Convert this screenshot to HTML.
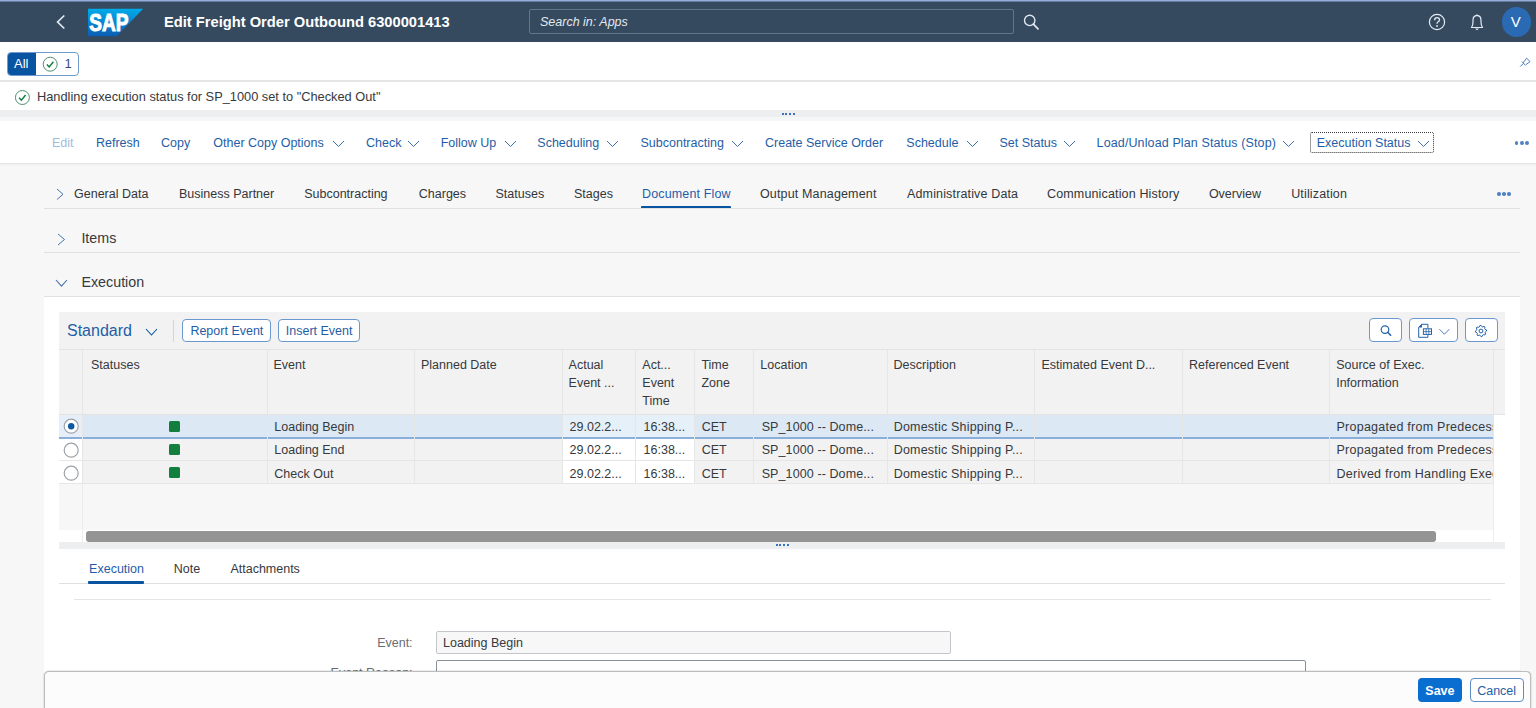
<!DOCTYPE html>
<html><head><meta charset="utf-8">
<style>
*{box-sizing:border-box}
html,body{margin:0;padding:0}
body{width:1536px;height:708px;overflow:hidden;position:relative;background:#f7f7f7;font-family:"Liberation Sans",sans-serif;color:#36393d}
.a{position:absolute}
.t{position:absolute;line-height:1;white-space:nowrap}
.lk{color:#0854a0}
.chev{position:absolute;width:12px;height:7px}
</style></head><body>

<!-- top line + shell -->
<div class="a" style="left:0;top:0;width:1536px;height:1px;background:#94acd7"></div><div class="a" style="left:0;top:1px;width:1536px;height:1px;background:#647b9d"></div>
<div class="a" style="left:0;top:2px;width:1536px;height:40px;background:#354a5f"></div>
<!-- back chevron -->
<svg class="a" style="left:54px;top:13px" width="14" height="18" viewBox="0 0 14 18"><path d="M10.3 2.5 L3.6 9 L10.3 15.5" fill="none" stroke="#e3ebf5" stroke-width="1.7"/></svg>
<!-- SAP logo -->
<svg class="a" style="left:88px;top:8px" width="56" height="29" viewBox="0 0 56 29">
<defs><linearGradient id="lg" x1="0" y1="0" x2="0" y2="1"><stop offset="0" stop-color="#00abeb"/><stop offset="0.45" stop-color="#0889d2"/><stop offset="1" stop-color="#0b5db3"/></linearGradient></defs>
<path d="M0 0.8 H55.2 L28.6 28.3 H0 Z" fill="url(#lg)"/>
<text x="1.2" y="23" font-family="Liberation Sans" font-weight="bold" font-size="23.5" fill="#fff" stroke="#fff" stroke-width="1" textLength="39.2" lengthAdjust="spacingAndGlyphs">SAP</text>
</svg>
<div class="t" style="left:164px;top:14.6px;font-size:14.7px;font-weight:bold;color:#fff">Edit Freight Order Outbound 6300001413</div>
<!-- search -->
<div class="a" style="left:529px;top:9px;width:485px;height:24.5px;border:1px solid #5f768f;border-radius:2px"></div>
<div class="t" style="left:540px;top:15.6px;font-size:12.5px;font-style:italic;color:#e3e9f0">Search in: Apps</div>
<svg class="a" style="left:1022px;top:13px" width="18" height="18" viewBox="0 0 18 18"><circle cx="7.7" cy="7.4" r="5.2" fill="none" stroke="#dfe7f0" stroke-width="1.4"/><path d="M11.4 11.2 L16 15.8" stroke="#dfe7f0" stroke-width="1.8" stroke-linecap="round"/></svg>
<!-- help -->
<svg class="a" style="left:1427px;top:12px" width="20" height="20" viewBox="0 0 20 20"><circle cx="10" cy="10" r="7.6" fill="none" stroke="#e5ebf2" stroke-width="1.2"/><path d="M7.6 8.2 Q7.6 5.6 10.1 5.6 Q12.5 5.6 12.5 7.9 Q12.5 9.3 10.9 10 Q10 10.5 10 11.8" fill="none" stroke="#e5ebf2" stroke-width="1.3"/><circle cx="10" cy="14" r="0.9" fill="#e5ebf2"/></svg>
<!-- bell -->
<svg class="a" style="left:1468px;top:12px" width="18" height="20" viewBox="0 0 18 20"><path d="M3.5 15.5 Q5 13.5 5 10 V8 Q5 3.8 9 3.4 Q13 3.8 13 8 V10 Q13 13.5 14.5 15.5 Z" fill="none" stroke="#e5ebf2" stroke-width="1.2" stroke-linejoin="round"/><path d="M7.6 16.8 Q9 18.4 10.4 16.8" fill="#e5ebf2" stroke="#e5ebf2" stroke-width="1"/><path d="M9 2.4 V3.4" stroke="#e5ebf2" stroke-width="1.2"/></svg>
<!-- avatar -->
<div class="a" style="left:1501.5px;top:7.2px;width:29.5px;height:29.5px;border-radius:50%;background:#2a6ab3"></div>
<div class="t" style="left:1510.8px;top:13.6px;font-size:15px;color:#fff">V</div>

<!-- row 2 -->
<div class="a" style="left:0;top:42px;width:1536px;height:38px;background:#fff"></div>
<div class="a" style="left:7px;top:52px;width:71.5px;height:24px;border:1px solid #6f9ccc;border-radius:4px;background:#fff;overflow:hidden"><div class="a" style="left:-1px;top:-1px;width:28.7px;height:24px;background:#0854a0"></div></div>
<div class="t" style="left:14px;top:57.2px;font-size:13px;color:#fff">All</div>
<svg class="a" style="left:42px;top:55.5px" width="17" height="17" viewBox="0 0 17 17"><circle cx="8.2" cy="8.2" r="7" fill="none" stroke="#4e9070" stroke-width="1"/><path d="M4.9 8.4 L7.2 10.9 L11.4 5.7" fill="none" stroke="#107e3e" stroke-width="1.5"/></svg>
<div class="t" style="left:64.5px;top:57.2px;font-size:13px;color:#34507a">1</div>
<svg class="a" style="left:1518px;top:56px" width="14" height="12" viewBox="0 0 14 12"><path d="M2.2 10.6 L5.4 7.4 M3.8 5.6 L7.6 9.4 M5.2 6.8 L8.6 2.2 L12.1 5.6 L7.9 8.6" fill="none" stroke="#4a7ac0" stroke-width="1" stroke-linejoin="round"/></svg>
<div class="a" style="left:0;top:80px;width:1536px;height:2px;background:#e5e5e5"></div>
<!-- message -->
<div class="a" style="left:0;top:82px;width:1536px;height:28px;background:#fff"></div>
<svg class="a" style="left:13.5px;top:89px" width="17" height="17" viewBox="0 0 17 17"><circle cx="8.4" cy="8.5" r="7" fill="none" stroke="#4e9070" stroke-width="1"/><path d="M5.1 8.7 L7.4 11.2 L11.6 6" fill="none" stroke="#107e3e" stroke-width="1.5"/></svg>
<div class="t" style="left:37px;top:91px;font-size:12.8px">Handling execution status for SP_1000 set to "Checked Out"</div>
<div class="a" style="left:0;top:110px;width:1536px;height:7px;background:#eceef0"></div>
<div class="a" style="left:0;top:117px;width:1536px;height:4px;background:#f5f6f7"></div>
<div class="a" style="left:781.5px;top:113px;width:2px;height:2px;background:#3a72bf"></div>
<div class="a" style="left:785.2px;top:113px;width:2px;height:2px;background:#3a72bf"></div>
<div class="a" style="left:788.9px;top:113px;width:2px;height:2px;background:#3a72bf"></div>
<div class="a" style="left:792.6px;top:113px;width:2px;height:2px;background:#3a72bf"></div>

<!-- toolbar -->
<div class="a" style="left:0;top:121px;width:1536px;height:42px;background:#fff"></div>
<div class="a" style="left:0;top:163px;width:1536px;height:1px;background:#e3e3e3"></div>
<div class="a" style="left:0;top:164px;width:1536px;height:2px;background:#f2f2f2"></div>
<div class="t" style="left:52px;top:136.62px;font-size:12.5px;color:#9fbcdc;">Edit</div>
<div class="t" style="left:96px;top:136.62px;font-size:12.5px;color:#1f5ea6;">Refresh</div>
<div class="t" style="left:161px;top:136.62px;font-size:12.5px;color:#1f5ea6;">Copy</div>
<div class="t" style="left:213.3px;top:136.62px;font-size:12.5px;color:#1f5ea6;">Other Copy Options</div>
<svg class="a" style="left:331.5px;top:139.9px" width="13" height="7.5" viewBox="0 0 13 7.5"><path d="M1 1 L6.5 6.5 L12 1" fill="none" stroke="#3d6fb0" stroke-width="1.0"/></svg>
<div class="t" style="left:366px;top:136.62px;font-size:12.5px;color:#1f5ea6;">Check</div>
<svg class="a" style="left:407px;top:139.9px" width="13" height="7.5" viewBox="0 0 13 7.5"><path d="M1 1 L6.5 6.5 L12 1" fill="none" stroke="#3d6fb0" stroke-width="1.0"/></svg>
<div class="t" style="left:440.7px;top:136.62px;font-size:12.5px;color:#1f5ea6;">Follow Up</div>
<svg class="a" style="left:503.5px;top:139.9px" width="13" height="7.5" viewBox="0 0 13 7.5"><path d="M1 1 L6.5 6.5 L12 1" fill="none" stroke="#3d6fb0" stroke-width="1.0"/></svg>
<div class="t" style="left:537.3px;top:136.62px;font-size:12.5px;color:#1f5ea6;">Scheduling</div>
<svg class="a" style="left:606px;top:139.9px" width="13" height="7.5" viewBox="0 0 13 7.5"><path d="M1 1 L6.5 6.5 L12 1" fill="none" stroke="#3d6fb0" stroke-width="1.0"/></svg>
<div class="t" style="left:640.5px;top:136.62px;font-size:12.5px;color:#1f5ea6;">Subcontracting</div>
<svg class="a" style="left:730.7px;top:139.9px" width="13" height="7.5" viewBox="0 0 13 7.5"><path d="M1 1 L6.5 6.5 L12 1" fill="none" stroke="#3d6fb0" stroke-width="1.0"/></svg>
<div class="t" style="left:765px;top:136.62px;font-size:12.5px;color:#1f5ea6;">Create Service Order</div>
<div class="t" style="left:906.3px;top:136.62px;font-size:12.5px;color:#1f5ea6;">Schedule</div>
<svg class="a" style="left:965.5px;top:139.9px" width="13" height="7.5" viewBox="0 0 13 7.5"><path d="M1 1 L6.5 6.5 L12 1" fill="none" stroke="#3d6fb0" stroke-width="1.0"/></svg>
<div class="t" style="left:999.4px;top:136.62px;font-size:12.5px;color:#1f5ea6;">Set Status</div>
<svg class="a" style="left:1062.5px;top:139.9px" width="13" height="7.5" viewBox="0 0 13 7.5"><path d="M1 1 L6.5 6.5 L12 1" fill="none" stroke="#3d6fb0" stroke-width="1.0"/></svg>
<div class="t" style="left:1096.6px;top:136.62px;font-size:12.5px;color:#1f5ea6;letter-spacing:0.12px;">Load/Unload Plan Status (Stop)</div>
<svg class="a" style="left:1282.2px;top:139.9px" width="13" height="7.5" viewBox="0 0 13 7.5"><path d="M1 1 L6.5 6.5 L12 1" fill="none" stroke="#3d6fb0" stroke-width="1.0"/></svg>
<div class="t" style="left:1316.7px;top:136.62px;font-size:12.5px;color:#1f5ea6;">Execution Status</div>
<svg class="a" style="left:1416.5px;top:139.9px" width="13" height="7.5" viewBox="0 0 13 7.5"><path d="M1 1 L6.5 6.5 L12 1" fill="none" stroke="#3d6fb0" stroke-width="1.0"/></svg>
<div class="a" style="left:1310px;top:132px;width:124px;height:21px;border:1px dotted #32363a;border-radius:2px"></div>
<div class="a" style="left:1514.6px;top:140.79999999999998px;width:3.8px;height:3.8px;border-radius:50%;background:#5282c2"></div>
<div class="a" style="left:1519.8999999999999px;top:140.79999999999998px;width:3.8px;height:3.8px;border-radius:50%;background:#5282c2"></div>
<div class="a" style="left:1525.3px;top:140.79999999999998px;width:3.8px;height:3.8px;border-radius:50%;background:#5282c2"></div>
<svg class="a" style="left:55.5px;top:187.5px" width="8" height="12.5" viewBox="0 0 8 12.5"><path d="M1 1 L7 6.25 L1 11.5" fill="none" stroke="#4672ad" stroke-width="1.0"/></svg>
<div class="t" style="left:74px;top:188.02px;font-size:12.5px;color:#32363a;">General Data</div>
<div class="t" style="left:179px;top:188.02px;font-size:12.5px;color:#32363a;">Business Partner</div>
<div class="t" style="left:304.2px;top:188.02px;font-size:12.5px;color:#32363a;">Subcontracting</div>
<div class="t" style="left:418.8px;top:188.02px;font-size:12.5px;color:#32363a;">Charges</div>
<div class="t" style="left:495.5px;top:188.02px;font-size:12.5px;color:#32363a;">Statuses</div>
<div class="t" style="left:574px;top:188.02px;font-size:12.5px;color:#32363a;">Stages</div>
<div class="t" style="left:642px;top:188.02px;font-size:12.5px;color:#1f5ea6;letter-spacing:0.15px;">Document Flow</div>
<div class="t" style="left:760px;top:188.02px;font-size:12.5px;color:#32363a;letter-spacing:0.15px;">Output Management</div>
<div class="t" style="left:907px;top:188.02px;font-size:12.5px;color:#32363a;letter-spacing:0.15px;">Administrative Data</div>
<div class="t" style="left:1047px;top:188.02px;font-size:12.5px;color:#32363a;letter-spacing:0.15px;">Communication History</div>
<div class="t" style="left:1208.9px;top:188.02px;font-size:12.5px;color:#32363a;">Overview</div>
<div class="t" style="left:1291.2px;top:188.02px;font-size:12.5px;color:#32363a;letter-spacing:0.15px;">Utilization</div>
<div class="a" style="left:641px;top:205.5px;width:90px;height:3px;background:#0854a0;border-radius:1px"></div>
<div class="a" style="left:1497.0px;top:192.39999999999998px;width:3.6px;height:3.6px;border-radius:50%;background:#5282c2"></div>
<div class="a" style="left:1502.1000000000001px;top:192.39999999999998px;width:3.6px;height:3.6px;border-radius:50%;background:#5282c2"></div>
<div class="a" style="left:1507.0px;top:192.39999999999998px;width:3.6px;height:3.6px;border-radius:50%;background:#5282c2"></div>
<div class="a" style="left:44px;top:207.5px;width:1476px;height:1px;background:#e1e1e1"></div>
<svg class="a" style="left:57px;top:232.8px" width="8.5" height="13" viewBox="0 0 8.5 13"><path d="M1 1 L7.5 6.5 L1 12" fill="none" stroke="#4672ad" stroke-width="1.0"/></svg>
<div class="t" style="left:81.4px;top:230.90px;font-size:14.3px;">Items</div>
<div class="a" style="left:44px;top:252px;width:1476px;height:1px;background:#e1e1e1"></div>
<svg class="a" style="left:54.5px;top:279.40000000000003px" width="13" height="8.2" viewBox="0 0 13 8.2"><path d="M1 1 L6.5 7.2 L12 1" fill="none" stroke="#4672ad" stroke-width="1.1"/></svg>
<div class="t" style="left:81.4px;top:275.30px;font-size:14.3px;">Execution</div>
<div class="a" style="left:44px;top:296px;width:1476px;height:1px;background:#e1e1e1"></div>
<div class="a" style="left:44px;top:297px;width:1476px;height:411px;background:#fff;"></div>
<div class="a" style="left:59px;top:312px;width:1446px;height:37px;background:#f2f2f2;"></div>
<div class="t" style="left:67px;top:322.76px;font-size:16px;color:#1f5ea6;">Standard</div>
<svg class="a" style="left:144.6px;top:327.6px" width="13" height="8" viewBox="0 0 13 8"><path d="M1 1 L6.5 7 L12 1" fill="none" stroke="#0854a0" stroke-width="1.1"/></svg>
<div class="a" style="left:173.3px;top:319.6px;width:1px;height:22px;background:#d5d5d5;"></div>
<div class="a" style="left:182px;top:318.5px;width:88.60000000000002px;height:23.5px;border:1px solid #6b98cf;border-radius:4px;background:#fff"></div>
<div class="t" style="left:190.4px;top:325.22px;font-size:12.5px;color:#1f5ea6;">Report Event</div>
<div class="a" style="left:278px;top:318.5px;width:81.80000000000001px;height:23.5px;border:1px solid #6b98cf;border-radius:4px;background:#fff"></div>
<div class="t" style="left:285.8px;top:325.22px;font-size:12.5px;color:#1f5ea6;">Insert Event</div>
<div class="a" style="left:1369px;top:318.3px;width:33.299999999999955px;height:23.69999999999999px;border:1px solid #6b98cf;border-radius:4px;background:#fff"></div>
<div class="a" style="left:1409.3px;top:318.3px;width:48.40000000000009px;height:23.69999999999999px;border:1px solid #6b98cf;border-radius:4px;background:#fff"></div>
<div class="a" style="left:1465px;top:318.3px;width:33.299999999999955px;height:23.69999999999999px;border:1px solid #6b98cf;border-radius:4px;background:#fff"></div>
<svg class="a" style="left:1377px;top:322px" width="18" height="18" viewBox="0 0 18 18"><circle cx="8" cy="7.6" r="3.8" fill="none" stroke="#2563ab" stroke-width="1.2"/><path d="M10.7 10.3 L13.6 13.2" stroke="#2563ab" stroke-width="1.6" stroke-linecap="round"/></svg>
<svg class="a" style="left:1415px;top:322px" width="40" height="18" viewBox="0 0 40 18"><path d="M3.7 5.3 L6.7 2.3 H12.9 V6.3 M3.7 5.3 V15.3 H12.9 V12.9" fill="none" stroke="#2563ab" stroke-width="1"/><path d="M3.2 5.6 L7 1.8 V5.6 Z" fill="#2563ab"/><rect x="8.4" y="6.8" width="8.1" height="5.6" fill="#fff" stroke="#2563ab" stroke-width="1"/><path d="M11.1 6.8 V12.4 M13.8 6.8 V12.4 M8.4 9.6 H16.5" stroke="#2563ab" stroke-width="0.8"/><path d="M24.4 7.2 L29.4 12.2 L34.4 7.2" fill="none" stroke="#4a7bbd" stroke-width="1"/></svg>
<svg class="a" style="left:1472.3px;top:321.8px" width="18" height="18" viewBox="0 0 18 18"><path d="M14.49 7.91 L14.60 9.00 L13.32 9.86 L13.07 10.68 L13.66 12.11 L12.96 12.96 L11.44 12.66 L10.68 13.07 L10.09 14.49 L9.00 14.60 L8.14 13.32 L7.32 13.07 L5.89 13.66 L5.04 12.96 L5.34 11.44 L4.93 10.68 L3.51 10.09 L3.40 9.00 L4.68 8.14 L4.93 7.32 L4.34 5.89 L5.04 5.04 L6.56 5.34 L7.32 4.93 L7.91 3.51 L9.00 3.40 L9.86 4.68 L10.68 4.93 L12.11 4.34 L12.96 5.04 L12.66 6.56 L13.07 7.32 Z" fill="none" stroke="#2563ab" stroke-width="1" stroke-linejoin="round"/><circle cx="9" cy="9" r="1.9" fill="none" stroke="#2563ab" stroke-width="1"/></svg>
<div class="a" style="left:59px;top:349px;width:1446px;height:66px;background:#f2f2f2;"></div>
<div class="a" style="left:59px;top:348.5px;width:1446px;height:1px;background:#e3e3e3;"></div>
<div class="a" style="left:82px;top:415px;width:1410.6px;height:23px;background:#dce8f4;"></div>
<div class="a" style="left:59px;top:415px;width:23px;height:23px;background:#e6eff9;"></div>
<div class="a" style="left:562px;top:415px;width:73px;height:23px;background:#e6f0f9;"></div>
<div class="a" style="left:635.8px;top:415px;width:58.6px;height:23px;background:#e6f0f9;"></div>
<div class="a" style="left:82px;top:438px;width:1410.6px;height:23px;background:#f2f2f2;"></div>
<div class="a" style="left:59px;top:438px;width:23px;height:23px;background:#fff;"></div>
<div class="a" style="left:562px;top:438px;width:73px;height:23px;background:#fff;"></div>
<div class="a" style="left:636px;top:438px;width:58.4px;height:23px;background:#fff;"></div>
<div class="a" style="left:82px;top:461px;width:1410.6px;height:23px;background:#f2f2f2;"></div>
<div class="a" style="left:59px;top:461px;width:23px;height:23px;background:#fff;"></div>
<div class="a" style="left:562px;top:461px;width:73px;height:23px;background:#fff;"></div>
<div class="a" style="left:636px;top:461px;width:58.4px;height:23px;background:#fff;"></div>
<div class="a" style="left:1493px;top:415px;width:12px;height:115px;background:#fff;"></div>
<div class="a" style="left:59px;top:414px;width:1446px;height:1px;background:#e3e3e3;"></div>
<div class="a" style="left:59px;top:437px;width:1433.6px;height:2px;background:#8aafda;"></div>
<div class="a" style="left:59px;top:460px;width:1433.6px;height:1px;background:#e6e6e6;"></div>
<div class="a" style="left:59px;top:483px;width:1433.6px;height:1px;background:#e6e6e6;"></div>
<div class="a" style="left:59px;top:484px;width:1433.6px;height:46px;background:#f7f7f7;"></div>
<div class="a" style="left:82px;top:349px;width:1px;height:135px;background:#e6e6e6;"></div>
<div class="a" style="left:82px;top:484px;width:1px;height:46px;background:#ececec;"></div>
<div class="a" style="left:266.5px;top:349px;width:1px;height:135px;background:#e6e6e6;"></div>
<div class="a" style="left:414px;top:349px;width:1px;height:135px;background:#e6e6e6;"></div>
<div class="a" style="left:561.6px;top:349px;width:1px;height:135px;background:#e6e6e6;"></div>
<div class="a" style="left:635.3px;top:349px;width:1px;height:135px;background:#e6e6e6;"></div>
<div class="a" style="left:694.4px;top:349px;width:1px;height:135px;background:#e6e6e6;"></div>
<div class="a" style="left:753.3px;top:349px;width:1px;height:135px;background:#e6e6e6;"></div>
<div class="a" style="left:886.5px;top:349px;width:1px;height:135px;background:#e6e6e6;"></div>
<div class="a" style="left:1034.4px;top:349px;width:1px;height:135px;background:#e6e6e6;"></div>
<div class="a" style="left:1182px;top:349px;width:1px;height:135px;background:#e6e6e6;"></div>
<div class="a" style="left:1329.2px;top:349px;width:1px;height:135px;background:#e6e6e6;"></div>
<div class="a" style="left:1492.6px;top:349px;width:1px;height:135px;background:#e6e6e6;"></div>
<div class="a" style="left:1492.6px;top:484px;width:1px;height:46px;background:#ececec;"></div>
<div class="a" style="left:59px;top:529.5px;width:1446px;height:1px;background:#e8e8e8;"></div>
<div class="t" style="left:91px;top:358.62px;font-size:12.5px;">Statuses</div>
<div class="t" style="left:273.5px;top:358.62px;font-size:12.5px;">Event</div>
<div class="t" style="left:421px;top:358.62px;font-size:12.5px;">Planned Date</div>
<div class="t" style="left:568.6px;top:358.62px;font-size:12.5px;">Actual</div>
<div class="t" style="left:568.6px;top:376.62px;font-size:12.5px;">Event ...</div>
<div class="t" style="left:642.3px;top:358.62px;font-size:12.5px;">Act...</div>
<div class="t" style="left:642.3px;top:376.62px;font-size:12.5px;">Event</div>
<div class="t" style="left:642.3px;top:394.62px;font-size:12.5px;">Time</div>
<div class="t" style="left:701.4px;top:358.62px;font-size:12.5px;">Time</div>
<div class="t" style="left:701.4px;top:376.62px;font-size:12.5px;">Zone</div>
<div class="t" style="left:760.3px;top:358.62px;font-size:12.5px;">Location</div>
<div class="t" style="left:893.5px;top:358.62px;font-size:12.5px;">Description</div>
<div class="t" style="left:1041.4px;top:358.62px;font-size:12.5px;">Estimated Event D...</div>
<div class="t" style="left:1189px;top:358.62px;font-size:12.5px;">Referenced Event</div>
<div class="t" style="left:1336.2px;top:358.62px;font-size:12.5px;">Source of Exec.</div>
<div class="t" style="left:1336.2px;top:376.62px;font-size:12.5px;">Information</div>
<svg class="a" style="left:62px;top:417.10px" width="18.4" height="18.4" viewBox="0 0 18.4 18.4"><circle cx="9.2" cy="9.2" r="7" fill="#fff" stroke="#9da2a7" stroke-width="1.2"/><circle cx="9.2" cy="9.3" r="3.2" fill="#0a57a6"/></svg>
<div class="a" style="left:169.1px;top:420.8px;width:10.8px;height:10.8px;background:#137f3f;border-radius:1.5px;"></div>
<div class="t" style="left:274.3px;top:421.22px;font-size:12.5px;">Loading Begin</div>
<div class="t" style="left:569.6px;top:421.22px;font-size:12.5px;">29.02.2...</div>
<div class="t" style="left:643.6px;top:421.22px;font-size:12.5px;">16:38...</div>
<div class="t" style="left:701.7px;top:421.22px;font-size:12.5px;">CET</div>
<div class="t" style="left:761.7px;top:421.22px;font-size:12.5px;letter-spacing:0.1px;">SP_1000 -- Dome...</div>
<div class="t" style="left:893.7px;top:421.22px;font-size:12.5px;letter-spacing:0.2px;">Domestic Shipping P...</div>
<div class="a" style="left:1336.5px;top:419.80px;width:156px;height:16px;overflow:hidden"><div class="t" style="left:0;top:1.42px;font-size:12.5px;letter-spacing:0.25px">Propagated from Predecess</div></div>
<svg class="a" style="left:62px;top:440.60px" width="18.4" height="18.4" viewBox="0 0 18.4 18.4"><circle cx="9.2" cy="9.2" r="7" fill="#fff" stroke="#9da2a7" stroke-width="1.2"/></svg>
<div class="a" style="left:169.1px;top:444.3px;width:10.8px;height:10.8px;background:#137f3f;border-radius:1.5px;"></div>
<div class="t" style="left:274.3px;top:443.52px;font-size:12.5px;">Loading End</div>
<div class="t" style="left:569.6px;top:443.52px;font-size:12.5px;">29.02.2...</div>
<div class="t" style="left:643.6px;top:443.52px;font-size:12.5px;">16:38...</div>
<div class="t" style="left:701.7px;top:443.52px;font-size:12.5px;">CET</div>
<div class="t" style="left:761.7px;top:443.52px;font-size:12.5px;letter-spacing:0.1px;">SP_1000 -- Dome...</div>
<div class="t" style="left:893.7px;top:443.52px;font-size:12.5px;letter-spacing:0.2px;">Domestic Shipping P...</div>
<div class="a" style="left:1336.5px;top:442.10px;width:156px;height:16px;overflow:hidden"><div class="t" style="left:0;top:1.42px;font-size:12.5px;letter-spacing:0.25px">Propagated from Predecess</div></div>
<svg class="a" style="left:62px;top:463.70px" width="18.4" height="18.4" viewBox="0 0 18.4 18.4"><circle cx="9.2" cy="9.2" r="7" fill="#fff" stroke="#9da2a7" stroke-width="1.2"/></svg>
<div class="a" style="left:169.1px;top:467.4px;width:10.8px;height:10.8px;background:#137f3f;border-radius:1.5px;"></div>
<div class="t" style="left:274.3px;top:467.82px;font-size:12.5px;">Check Out</div>
<div class="t" style="left:569.6px;top:467.82px;font-size:12.5px;">29.02.2...</div>
<div class="t" style="left:643.6px;top:467.82px;font-size:12.5px;">16:38...</div>
<div class="t" style="left:701.7px;top:467.82px;font-size:12.5px;">CET</div>
<div class="t" style="left:761.7px;top:467.82px;font-size:12.5px;letter-spacing:0.1px;">SP_1000 -- Dome...</div>
<div class="t" style="left:893.7px;top:467.82px;font-size:12.5px;letter-spacing:0.2px;">Domestic Shipping P...</div>
<div class="a" style="left:1336.5px;top:466.40px;width:156px;height:16px;overflow:hidden"><div class="t" style="left:0;top:1.42px;font-size:12.5px;letter-spacing:0.25px">Derived from Handling Exec</div></div>
<div class="a" style="left:59px;top:530px;width:1446px;height:12px;background:#fff;"></div>
<div class="a" style="left:82px;top:530px;width:1px;height:12px;background:#eeeeee;"></div>
<div class="a" style="left:1492.6px;top:530px;width:1px;height:12px;background:#eeeeee;"></div>
<div class="a" style="left:85.6px;top:531.2px;width:1350.4px;height:10.4px;background:#949494;border-radius:3px;"></div>
<div class="a" style="left:59px;top:542px;width:1446px;height:7px;background:#eceef0;"></div>
<div class="a" style="left:775.5px;top:543.5px;width:2px;height:2px;background:#3a72bf;"></div>
<div class="a" style="left:779.2px;top:543.5px;width:2px;height:2px;background:#3a72bf;"></div>
<div class="a" style="left:782.9px;top:543.5px;width:2px;height:2px;background:#3a72bf;"></div>
<div class="a" style="left:786.6px;top:543.5px;width:2px;height:2px;background:#3a72bf;"></div>
<div class="t" style="left:89.1px;top:563.12px;font-size:12.5px;color:#1f5ea6;">Execution</div>
<div class="t" style="left:173.8px;top:563.12px;font-size:12.5px;">Note</div>
<div class="t" style="left:230.4px;top:563.12px;font-size:12.5px;">Attachments</div>
<div class="a" style="left:59px;top:583px;width:1446px;height:1px;background:#e0e0e0;"></div>
<div class="a" style="left:88.2px;top:581px;width:55.8px;height:3px;background:#0854a0;border-radius:1px;"></div>
<div class="a" style="left:74px;top:598.5px;width:1417px;height:1px;background:#e5e5e5;"></div>
<div class="t" style="left:0;width:412.6px;text-align:right;top:636.62px;font-size:12.5px;color:#6a6d70">Event:</div>
<div class="t" style="left:0;width:412.6px;text-align:right;top:667.42px;font-size:12.5px;color:#6a6d70">Event Reason:</div>
<div class="a" style="left:435.9px;top:630.6px;width:515px;height:23.4px;border:1px solid #c2c6cb;border-radius:2px;background:#f7f7f7"></div>
<div class="t" style="left:443px;top:636.62px;font-size:12.5px;">Loading Begin</div>
<div class="a" style="left:435.9px;top:660.3px;width:870px;height:30px;border:1px solid #89919a;border-radius:2px;background:#fff"></div>
<div class="a" style="left:43.6px;top:671px;width:1487.7px;height:60px;border:1px solid #bdbdbd;border-radius:5px;background:#fcfcfc;box-shadow:0 0 1.5px rgba(0,0,0,0.35)"></div>
<div class="a" style="left:1418px;top:678.4px;width:44px;height:23.6px;border-radius:4px;background:#0a6ed1"></div>
<div class="t" style="left:1425.3px;top:684.72px;font-size:12.5px;color:#fff;font-weight:bold;">Save</div>
<div class="a" style="left:1469.6px;top:678.3px;width:54px;height:23.4px;border:1px solid #5b8cc6;border-radius:4px;background:#fff"></div>
<div class="t" style="left:1477.2px;top:684.72px;font-size:12.5px;color:#1f5ea6;">Cancel</div>
<div class="a" style="left:1520.5px;top:297px;width:15.5px;height:374px;background:#f7f7f7;"></div>
</body></html>
